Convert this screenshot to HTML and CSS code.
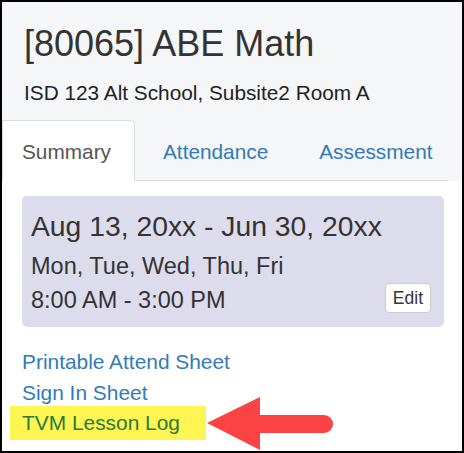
FILE: index.html
```html
<!DOCTYPE html>
<html>
<head>
<meta charset="utf-8">
<link rel="stylesheet" href="styles.css">
</head>
<body>
<div class="frame">
  <div class="header">
    <h1 class="title">[80065] ABE Math</h1>
    <div class="subtitle">ISD 123 Alt School, Subsite2 Room A</div>
    <div class="tabs">
      <div class="tab tab-summary">Summary</div>
      <div class="tab tab-attendance">Attendance</div>
      <div class="tab tab-assessment">Assessment</div>
    </div>
  </div>
  <div class="content">
    <div class="card">
      <div class="dates">Aug 13, 20xx - Jun 30, 20xx</div>
      <div class="days">Mon, Tue, Wed, Thu, Fri</div>
      <div class="time-row">
        <div class="time">8:00 AM - 3:00 PM</div>
        <button class="edit">Edit</button>
      </div>
    </div>
    <div class="links">
      <div class="link">Printable Attend Sheet</div>
      <div class="link">Sign In Sheet</div>
      <div class="link highlight">TVM Lesson Log</div>
    </div>
  </div>
  <svg class="arrow" width="464" height="453" viewBox="0 0 464 453">
    <polygon points="207,423 260,397 260,415 324,415 324,433 260,433 260,450" fill="#fb4343"/>
    <path d="M258 424 H324" stroke="#fb4343" stroke-width="18" stroke-linecap="round" fill="none"/>
  </svg>
</div>
</body>
</html>
```

FILE: styles.css
```css
html, body {
  margin: 0;
  padding: 0;
  background: #fff;
}
.frame {
  position: relative;
  width: 464px;
  height: 453px;
  box-sizing: border-box;
  border: 2px solid #000;
  overflow: hidden;
  font-family: "Liberation Sans", Arial, sans-serif;
  color: #333;
  background: #fff;
}
.header {
  background: #f4f6f8;
  padding-top: 22px;
}
.title {
  margin: 0 0 17px 22px;
  font-size: 36px;
  font-weight: normal;
  line-height: 40px;
  color: #333;
}
.subtitle {
  margin-left: 22px;
  font-size: 20.8px;
  line-height: 24px;
  color: #222;
}
.tabs {
  display: flex;
  margin-top: 15px;
  margin-right: 14px;
  border-bottom: 1px solid #dcdcdc;
}
.tab {
  font-size: 20.8px;
  line-height: 24px;
  padding-top: 20px;
  padding-bottom: 16px;
  color: #337ab7;
}
.tab-summary {
  background: #fff;
  color: #555;
  border: 1px solid #dcdcdc;
  border-bottom-color: #fff;
  border-top-right-radius: 5px;
  margin-bottom: -1px;
  padding-top: 19px;
  padding-left: 19px;
  padding-right: 23px;
}
.tab-attendance {
  padding-left: 28px;
  padding-right: 25px;
}
.tab-assessment {
  padding-left: 26px;
}
.content {
  padding-top: 15px;
}
.card {
  margin: 0 18px 0 20px;
  background: #dddced;
  border-radius: 5px;
  padding: 14px 13px 10px 9px;
}
.dates {
  font-size: 28.3px;
  line-height: 32px;
  margin-bottom: 8px;
}
.days, .time {
  font-size: 23.5px;
  line-height: 33px;
}
.time-row {
  display: flex;
  justify-content: space-between;
  align-items: flex-end;
}
.edit {
  height: 30px;
  box-sizing: border-box;
  padding: 0 7px;
  margin-bottom: 4px;
  border: 1px solid #ccc;
  border-radius: 4px;
  background: #fff;
  font-family: "Liberation Sans", Arial, sans-serif;
  font-size: 17.5px;
  line-height: 28px;
  color: #333;
}
.links {
  margin: 20px 0 0 20px;
}
.link {
  font-size: 20.9px;
  line-height: 30.5px;
  color: #337ab7;
}
.highlight {
  width: 184px;
  margin-left: -12px;
  margin-top: -2px;
  padding: 2px 0 1px 12px;
  background: #fdf552;
  color: #2b7a3b;
}
.arrow {
  position: absolute;
  left: -2px;
  top: -2px;
  pointer-events: none;
}
```
